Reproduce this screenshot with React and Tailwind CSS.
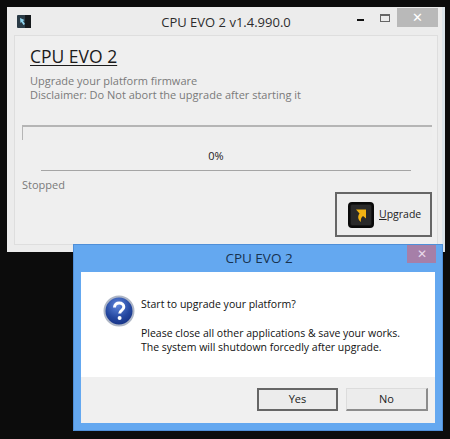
import React from "react";

const font = { fontFamily: '"Open Sans", "Noto Sans", sans-serif' };

function HelpIcon() {
  return (
    <svg width="32" height="32" viewBox="0 0 32 32">
      <defs>
        <radialGradient id="q" cx="45%" cy="30%" r="75%">
          <stop offset="0%" stopColor="#5f86dc" />
          <stop offset="60%" stopColor="#24479f" />
          <stop offset="100%" stopColor="#142e80" />
        </radialGradient>
      </defs>
      <circle cx="16" cy="16" r="14.5" fill="url(#q)" stroke="#aeb6c6" strokeWidth="2" />
      <path d="M11.5 12.5c0-3 2.2-4.500 4.700-4.500 2.700 0 4.600 1.600 4.600 4 0 3.300-4.100 3.500-4.100 6.500" fill="none" stroke="#fff" strokeWidth="3" />
      <circle cx="16.600" cy="23" r="2" fill="#fff" />
    </svg>
  );
}

function AppIcon() {
  return (
    <svg width="14" height="13" viewBox="0 0 14 13">
      <rect width="14" height="13" rx="1" fill="#2a3b46" />
      <rect x="8" y="0" width="6" height="13" fill="#15191c" />
      <path d="M3 3l4.500 2-1.500 1 2 3-1.500 1-2-3-1 1z" fill="#8fd4ee" />
    </svg>
  );
}

function UpgradeIcon() {
  return (
    <svg width="26" height="26" viewBox="0 0 26 26">
      <rect x="1" y="1" width="24" height="24" rx="3" fill="#161616" stroke="#0a0a0a" strokeWidth="2" />
      <rect x="3" y="3" width="20" height="20" rx="1" fill="#2a2a2a" />
      <path d="M8 7.500h10v9l-3-2.500c-2 1.500-2.500 3.500-2 6-2.500-1.500-4-5-1.500-8.500z" fill="#f2b313" />
    </svg>
  );
}

export default function App() {
  return (
    <div className="relative w-[450px] h-[439px] overflow-hidden bg-[#0c0c0c]" style={font}>
      {/* Main window */}
      <div className="absolute left-[7px] top-[7px] w-[438px] h-[245px] flex flex-col bg-[#ececec] border-r-[3px] border-[#dbe4ea]">
        <div className="relative h-[28px] shrink-0 flex items-center justify-center pl-[10px]">
          <div className="absolute left-[10px] top-[8px] flex"><AppIcon /></div>
          <span className="text-[13px] leading-none text-[#2c2c2c] ml-[-7px] mt-[3px]">CPU EVO 2 v1.4.990.0</span>
          <span className="absolute left-[350px] top-[12px] w-[7px] h-[2px] bg-[#111]" />
          <span className="absolute left-[373px] top-[7px] w-[10px] h-[8px] border border-[#666] border-t-2" />
          <span className="absolute left-[390px] top-[1px] w-[41px] h-[19px] bg-[#b9b9b9] flex items-center justify-center text-white text-[13px] leading-none">✕</span>
        </div>
        <div className="flex-1 flex flex-col mx-[7px] mb-[7px] mr-[4px] bg-[#efefef] border-t border-l border-r border-b border-[#dedede] px-[7px]">
          <div className="h-[89px] shrink-0 pl-[8px] pt-[7px]">
            <div className="text-[17.5px] leading-[26px] text-[#1b1b1b] underline underline-offset-2 decoration-1">CPU EVO 2</div>
            <div className="mt-[5px] text-[11px] leading-[14px] text-[#7a7a7a]">Upgrade your platform firmware</div>
            <div className="text-[11px] leading-[14px] text-[#7a7a7a]">Disclaimer: Do Not abort the upgrade after starting it</div>
          </div>
          <div className="h-[15px] w-[410px] shrink-0 border-t-2 border-l border-[#b5b5b5] bg-[#eeeeee]" />
          <div className="w-[410px] pr-[22px] text-center text-[11px] leading-[14px] text-[#222] mt-[9px]">0%</div>
          <div className="h-px w-[370px] ml-[19px] mt-[7px] bg-[#a5a5a5] shrink-0" />
          <div className="text-[11px] leading-[14px] text-[#7a7a7a] mt-[7px]">Stopped</div>
          <div className="w-[410px] flex justify-end">
            <div className="w-[97px] h-[45px] border-2 border-[#666] bg-[#ededed] flex items-center pl-[11px] gap-[5px]">
              <UpgradeIcon />
              <span className="text-[10.5px] text-[#222]"><span className="underline">U</span>pgrade</span>
            </div>
          </div>
        </div>
      </div>

      {/* Dialog */}
      <div className="absolute left-[73px] top-[244px] w-[370px] h-[187px] flex flex-col bg-[#64a8f0] border border-[#4f8fd8] px-[7px] pb-[7px]">
        <div className="relative h-[27px] shrink-0 flex items-center justify-center">
          <span className="text-[13.5px] leading-none text-[#17324f] mt-[1px] ml-[2px]">CPU EVO 2</span>
          <span className="absolute right-[-1px] top-0 w-[29px] h-[18px] bg-[#a67fa8] flex items-center justify-center text-[#e8d8ea] text-[12px] leading-none">✕</span>
        </div>
        <div className="flex-1 flex flex-col bg-[#f0f0f0]">
          <div className="h-[105px] bg-white flex items-start pl-[22px] pt-[23px] gap-[6px]">
            <HelpIcon />
            <div className="text-[10.5px] leading-[14px] text-[#111] mt-[2px]">
              <div>Start to upgrade your platform?</div>
              <div className="mt-[15px]">Please close all other applications &amp; save your works.</div>
              <div>The system will shutdown forcedly after upgrade.</div>
            </div>
          </div>
          <div className="flex-1 flex justify-end items-start pt-[11px] pr-[7px] gap-[8px]">
            <div className="w-[81px] h-[23px] bg-[#ececec] border-2 border-[#666] flex items-center justify-center text-[11px] text-[#222]">Yes</div>
            <div className="w-[82px] h-[23px] bg-[#ececec] border-t border-l border-[#dcdcdc] border-r-2 border-b-2 border-r-[#8c8c8c] border-b-[#8c8c8c] flex items-center justify-center text-[11px] text-[#222]">No</div>
          </div>
        </div>
      </div>
    </div>
  );
}
